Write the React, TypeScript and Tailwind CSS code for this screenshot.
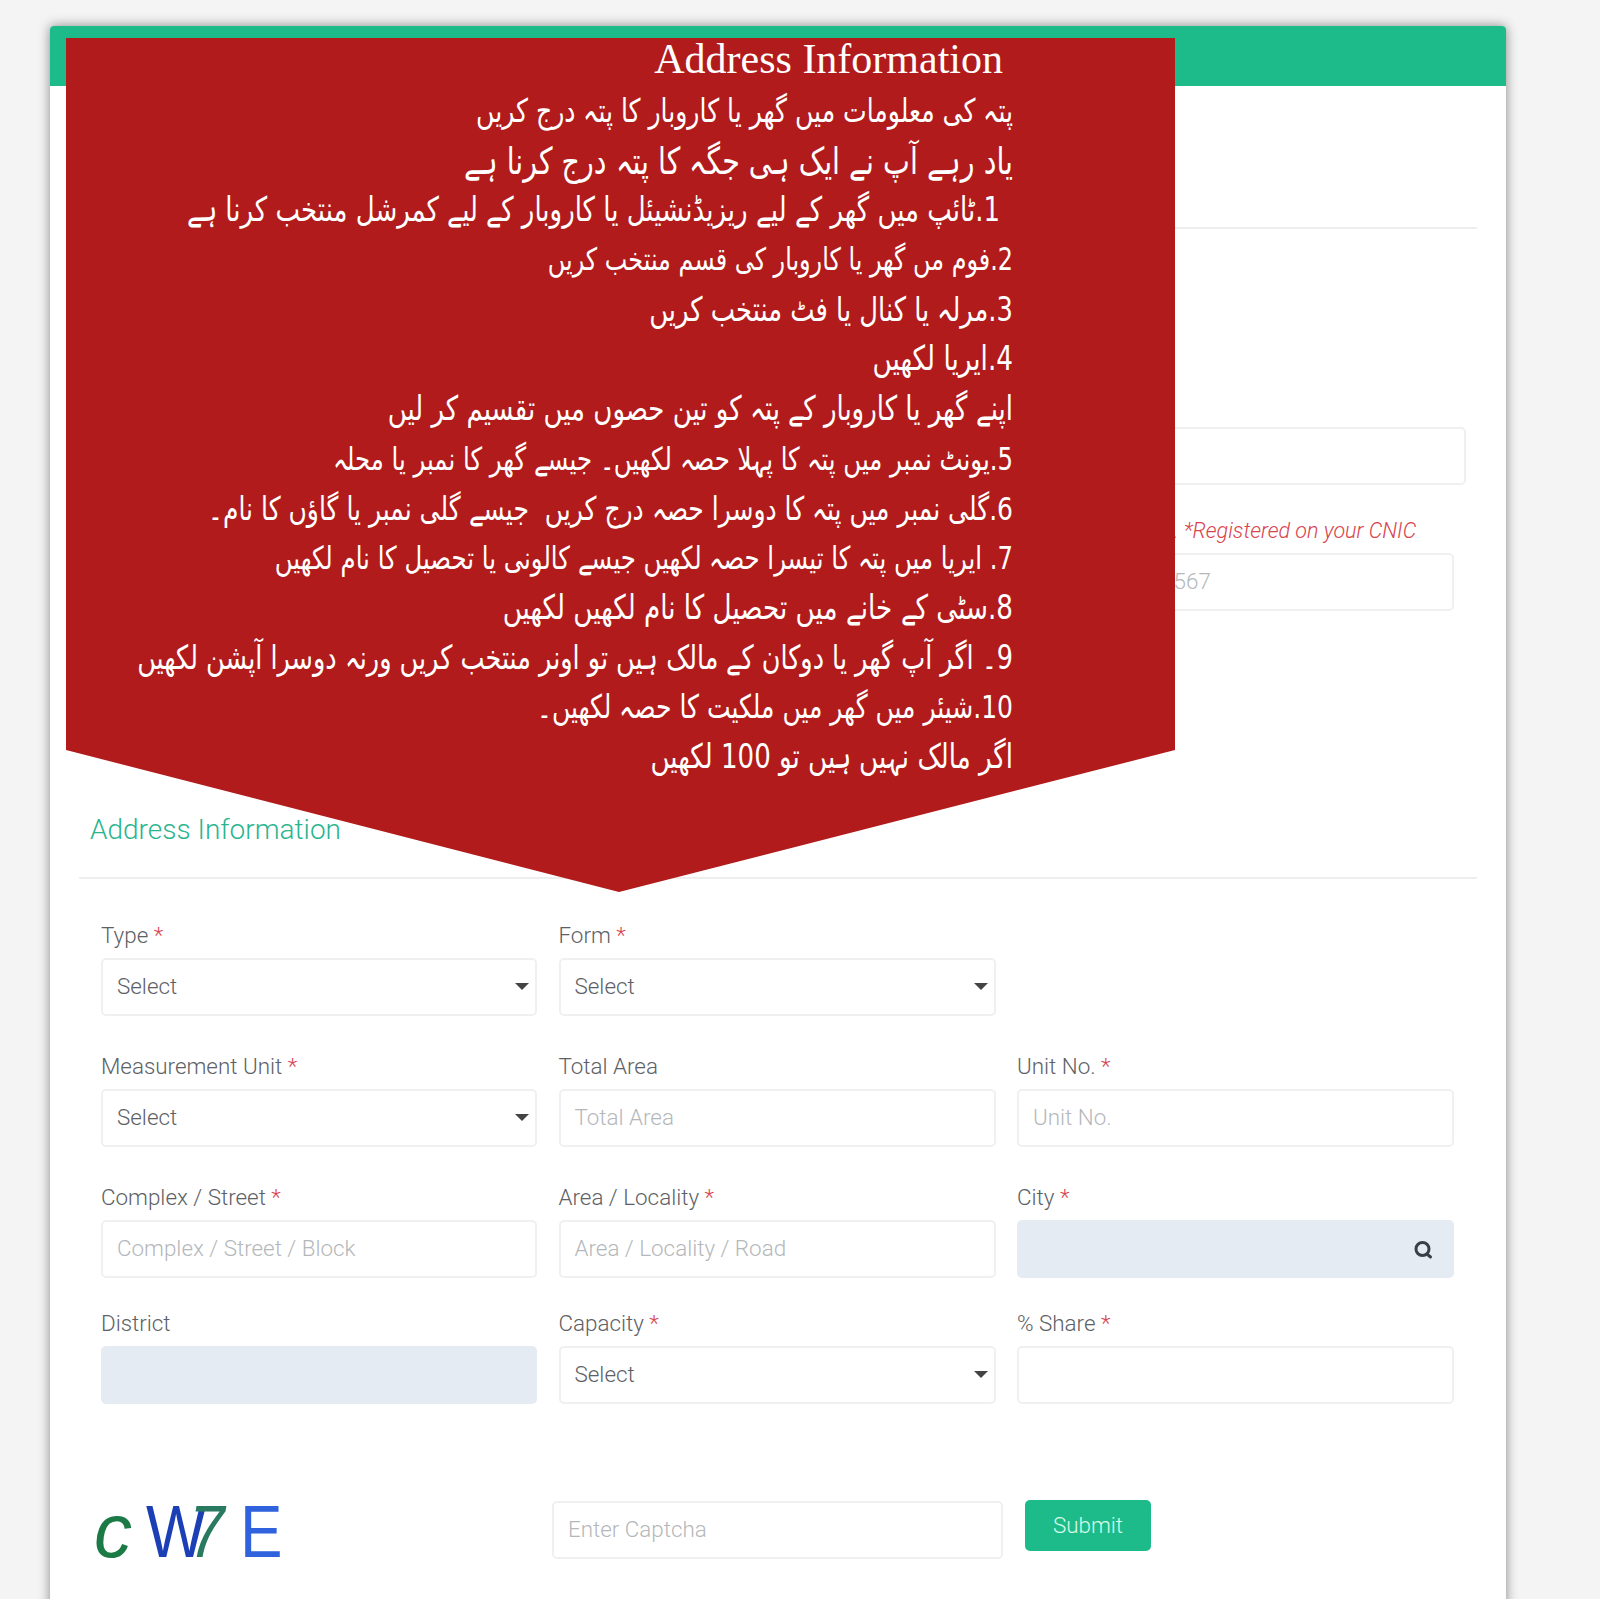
const URDU_LINES = [
  { text: "پتہ کی معلومات میں گھر یا کاروبار کا پتہ درج کریں", size: "text-[25.1px]" },
  { text: "یاد رہے آپ نے ایک ہی جگہ کا پتہ درج کرنا ہے", size: "text-[28.5px]" },
  { text: "1.ٹائپ میں گھر کے لیے ریزیڈنشیئل یا کاروبار کے لیے کمرشل منتخب کرنا ہے", size: "text-[26px] mr-[13px]" },
  { text: "2.فوم مں گھر یا کاروبار کی قسم منتخب کریں", size: "text-[23.9px]" },
  { text: "3.مرلہ یا کنال یا فٹ منتخب کریں", size: "text-[25.8px]" },
  { text: "4.ایریا لکھیں", size: "text-[26.3px]" },
  { text: "اپنے گھر یا کاروبار کے پتہ کو تین حصوں میں تقسیم کر لیں", size: "text-[26px]" },
  { text: "5.یونٹ نمبر میں پتہ کا پہلا حصہ لکھیں۔ جیسے گھر کا نمبر یا محلہ", size: "text-[24.4px]" },
  { text: "6.گلی نمبر میں پتہ کا دوسرا حصہ درج کریں  جیسے گلی نمبر یا گاؤں کا نام۔", size: "text-[25px]" },
  { text: "7. ایریا میں پتہ کا تیسرا حصہ لکھیں جیسے کالونی یا تحصیل کا نام لکھیں", size: "text-[24.4px]" },
  { text: "8.سٹی کے خانے میں تحصیل کا نام لکھیں لکھیں", size: "text-[26.2px]" },
  { text: "9۔ اگر آپ گھر یا دوکان کے مالک ہیں تو اونر منتخب کریں ورنہ دوسرا آپشن لکھیں", size: "text-[25.5px]" },
  { text: "10.شیئر میں گھر میں ملکیت کا حصہ لکھیں۔", size: "text-[25px]" },
  { text: "اگر مالک نہیں ہیں تو 100 لکھیں", size: "text-[26.1px]" },
];

const inputBox = "h-[58px] w-full rounded-[5px] border-2 border-[#eef0f2] bg-white px-[14px] flex items-center text-[22.4px] font-light";

function Field({ label, required, children }: { label: string; required?: boolean; children: React.ReactNode }) {
  return (
    <div className="flex flex-col">
      <div className="mb-[11px] h-[24px] text-[22.4px] leading-[24px] font-light whitespace-nowrap text-[#5d6166]">
        {label}
        {required && <span className="text-[#d8434e]"> *</span>}
      </div>
      {children}
    </div>
  );
}

function SelectBox() {
  return (
    <div className={`${inputBox} justify-between text-[#5d6166]`}>
      <span>Select</span>
      <span className="mr-[-8px] mb-[2px] h-0 w-0 border-x-[7px] border-t-[7px] border-x-transparent border-t-[#444]" />
    </div>
  );
}

function TextBox({ placeholder }: { placeholder?: string }) {
  return <div className={`${inputBox} whitespace-nowrap text-[#b5b8bb]`}>{placeholder}</div>;
}

function ReadOnlyBox({ search }: { search?: boolean }) {
  return (
    <div className="flex h-[58px] items-center justify-end rounded-[5px] bg-[#e4ebf3] pr-[20px]">
      {search && (
        <svg width="22" height="22" viewBox="0 0 22 22" fill="none" stroke="#3a3f45" strokeWidth="3" strokeLinecap="round">
          <circle cx="10.5" cy="11" r="6.5" />
          <path d="M15.5 16.5l3 2.5" />
        </svg>
      )}
    </div>
  );
}

export default function App() {
  return (
    <div className="relative h-[1599px] w-[1600px] overflow-hidden bg-[#f4f4f4] pt-[26px] pl-[50px] font-['Roboto',sans-serif]">
      <div className="h-[1700px] w-[1456px] rounded-t-[4px] bg-white shadow-[0_0_12px_rgba(0,0,0,0.45)]">
        <div className="h-[60px] rounded-t-[4px] bg-[#1dbb8a]" />

        <div className="px-[29px]">
          <div className="mt-[141px] h-[2px] bg-[#eeeeee]" />

          <div className="mt-[198px] pr-[11px] pl-[22px]">
            <TextBox />
          </div>

          <div className="mt-[34px] grid grid-cols-[436px_437px_437px] gap-x-[21.5px] pl-[22px]">
            <div />
            <div />
            <div className="flex flex-col">
              <div className="mb-[10px] h-[24px] text-[21.5px] leading-[24px] font-light whitespace-nowrap text-[#d8434e] italic">
                Mobile Phone No. *Registered on your CNIC
              </div>
              <TextBox placeholder="e.g 0300-1234567" />
            </div>
          </div>

          <div className="mt-[202px] pl-[11px] text-[28px] leading-[34px] font-light text-[#2bb58f]">
            Address Information
          </div>
          <div className="mt-[30px] h-[2px] bg-[#eeeeee]" />

          <div className="mt-[44px] grid grid-cols-[436px_437px_437px] gap-x-[21.5px] pl-[22px]">
            <Field label="Type" required>
              <SelectBox />
            </Field>
            <Field label="Form" required>
              <SelectBox />
            </Field>
            <div />
          </div>

          <div className="mt-[38px] grid grid-cols-[436px_437px_437px] gap-x-[21.5px] pl-[22px]">
            <Field label="Measurement Unit" required>
              <SelectBox />
            </Field>
            <Field label="Total Area">
              <TextBox placeholder="Total Area" />
            </Field>
            <Field label="Unit No." required>
              <TextBox placeholder="Unit No." />
            </Field>
          </div>

          <div className="mt-[38px] grid grid-cols-[436px_437px_437px] gap-x-[21.5px] pl-[22px]">
            <Field label="Complex / Street" required>
              <TextBox placeholder="Complex / Street / Block" />
            </Field>
            <Field label="Area / Locality" required>
              <TextBox placeholder="Area / Locality / Road" />
            </Field>
            <Field label="City" required>
              <ReadOnlyBox search />
            </Field>
          </div>

          <div className="mt-[33px] grid grid-cols-[436px_437px_437px] gap-x-[21.5px] pl-[22px]">
            <Field label="District">
              <ReadOnlyBox />
            </Field>
            <Field label="Capacity" required>
              <SelectBox />
            </Field>
            <Field label="% Share" required>
              <TextBox />
            </Field>
          </div>

          <div className="mt-[96px] flex items-start pl-[15px]">
            <div className="flex h-[62px] w-[458px] items-baseline font-['Liberation_Sans',sans-serif] leading-[62px]">
              <span className="inline-block w-[52px] text-[76px] text-[#1c7a46] italic">c</span>
              <span className="inline-block w-[43px] origin-left scale-x-[0.85] text-[75px] text-[#1c3fb5]">W</span>
              <span className="inline-block w-[51px] origin-left scale-x-[0.85] text-[75px] text-[#2a7a62] italic">7</span>
              <span className="inline-block w-[40px] origin-left scale-x-[0.85] text-[75px] text-[#2f62dc]">E</span>
            </div>
            <div className="mt-[1px] w-[451px]">
              <TextBox placeholder="Enter Captcha" />
            </div>
            <div className="ml-[22px] flex h-[51px] w-[126px] items-center justify-center rounded-[5px] bg-[#1dbb8a] text-[22.4px] font-light text-[#d6fbe9]">
              Submit
            </div>
          </div>
        </div>
      </div>

      <div className="absolute top-[38px] left-[66px] flex h-[854px] w-[1109px] flex-col items-end bg-[#b21b1b] pt-[2px] pr-[162px] [clip-path:polygon(0_0,100%_0,100%_712px,553px_100%,0_712px)]">
        <div className="mr-[10px] mb-[9px] h-[38px] font-['Liberation_Serif',serif] text-[42px] leading-[38px] whitespace-nowrap text-white">
          Address Information
        </div>
        {URDU_LINES.map((line, idx) => (
          <div
            key={idx}
            dir="rtl"
            className={`h-[49.7px] scale-y-[1.3] font-['DejaVu_Sans',sans-serif] leading-[49.7px] whitespace-pre text-white ${line.size}`}
          >
            {line.text}
          </div>
        ))}
      </div>
    </div>
  );
}
